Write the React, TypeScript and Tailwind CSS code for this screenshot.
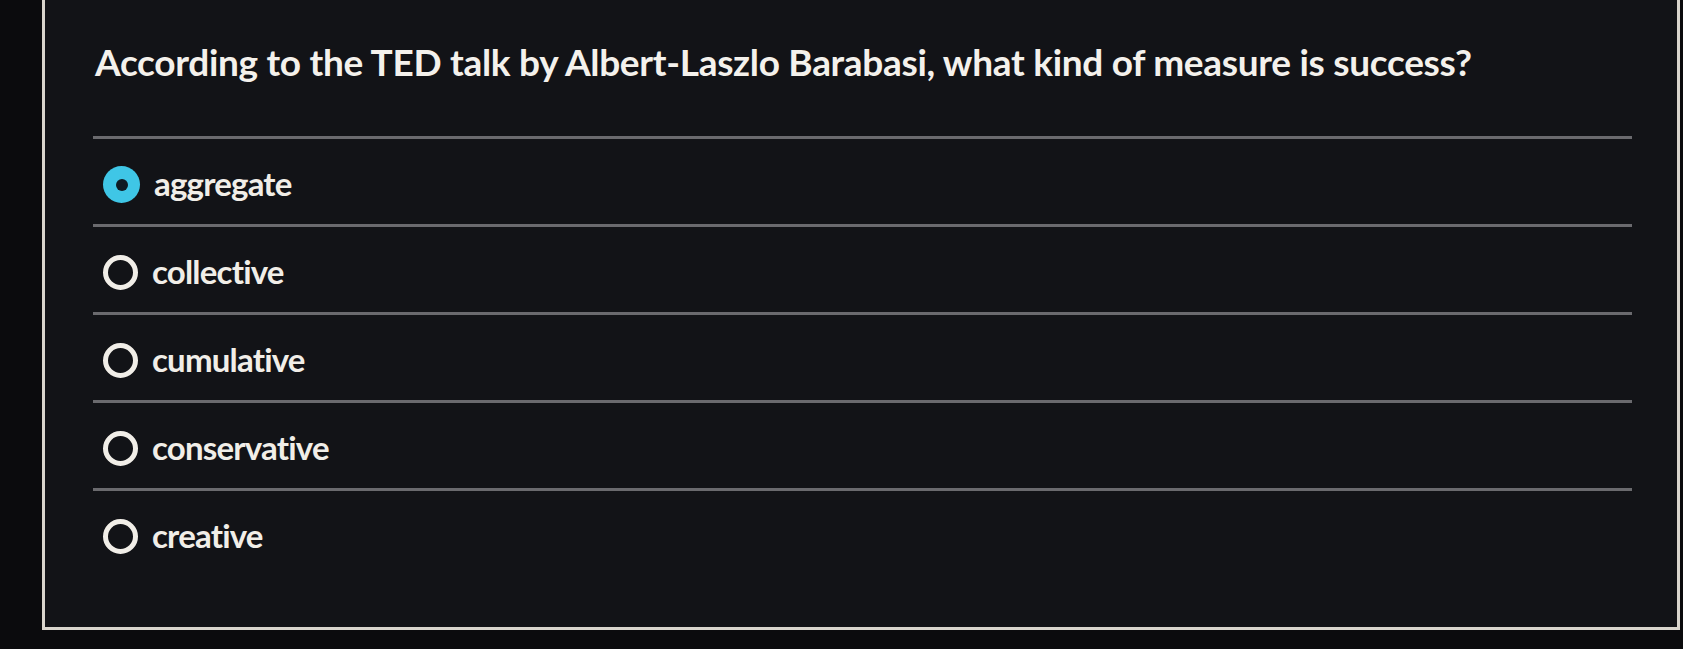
import React from "react";

const options = ["aggregate", "collective", "cumulative", "conservative", "creative"];

export default function App() {
  return (
    <div
      className="w-full h-[649px] bg-[#0b0b0d] pl-[42px] pr-[3px] pb-[19px] overflow-hidden"
      style={{ fontFamily: "Lato, 'Open Sans', sans-serif" }}
    >
      <div className="h-full border-[3px] border-t-0 border-[#d9d5cd] bg-[#121317] pt-[40px] pl-[50px] pr-[45px]">
        <h1 className="text-[37px] leading-[44px] font-bold text-[#f4f1ec] whitespace-nowrap tracking-[-0.3px]">
          According to the TED talk by Albert-Laszlo Barabasi, what kind of measure is success?
        </h1>
        <div className="mt-[52px] -ml-[2px]">
          {options.map((o, i) => (
            <div
              key={o}
              className="h-[88px] border-t-[3px] border-[#6a6a6e] flex items-center pl-[10px] gap-[14px] pt-[6px]"
            >
              {i === 0 ? (
                <span className="w-[37px] h-[37px] rounded-full bg-[#3fc6e6] flex items-center justify-center shrink-0">
                  <span className="w-[12px] h-[12px] rounded-full bg-[#0f1a22]" />
                </span>
              ) : (
                <span className="w-[35px] h-[35px] rounded-full border-[5px] border-[#f1eee8] shrink-0" />
              )}
              <span className="text-[33px] font-bold text-[#f1eee8] tracking-[-0.8px] leading-none pb-[2px]">
                {o}
              </span>
            </div>
          ))}
        </div>
      </div>
    </div>
  );
}
